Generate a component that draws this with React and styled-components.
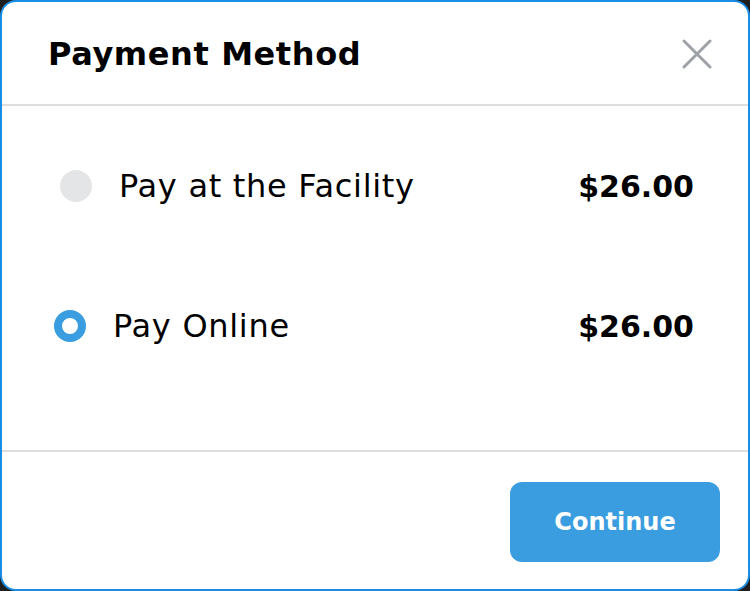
import React, { useState } from "react";
import styled, { createGlobalStyle } from "styled-components";

const GlobalStyle = createGlobalStyle`
  html, body {
    margin: 0;
    padding: 0;
    background: #1f1f1f;
  }
  * {
    box-sizing: border-box;
  }
`;

const Modal = styled.section`
  width: 750px;
  height: 591px;
  background: #ffffff;
  border: 2px solid #1a8de6;
  border-radius: 16px;
  display: flex;
  flex-direction: column;
  overflow: hidden;
  font-family: "DejaVu Sans", "Noto Sans", sans-serif;
  color: #000;
`;

const Header = styled.header`
  height: 104px;
  display: flex;
  align-items: center;
  justify-content: space-between;
  padding: 2px 36px 0 46px;
  border-bottom: 2px solid #dedede;
`;

const Title = styled.h2`
  margin: 0;
  font-size: 32px;
  font-weight: 700;
  letter-spacing: 0.6px;
`;

const CloseButton = styled.button`
  width: 30px;
  height: 30px;
  padding: 0;
  border: none;
  background: none;
  cursor: pointer;
  display: flex;
  align-items: center;
  justify-content: center;
`;

const Options = styled.div`
  height: 346px;
  display: flex;
  flex-direction: column;
  gap: 70px;
  padding: 45px 54px 0 52px;
  border-bottom: 2px solid #dedede;
`;

const OptionRow = styled.label`
  height: 70px;
  display: flex;
  align-items: center;
  gap: 27px;
  padding-left: ${(props) => (props.checked ? "0" : "6px")};
  cursor: pointer;
`;

const Radio = styled.span`
  flex: none;
  width: 32px;
  height: 32px;
  border-radius: 50%;
  background: ${(props) => (props.checked ? "#ffffff" : "#e4e5e7")};
  border: ${(props) => (props.checked ? "8px solid #3a9de0" : "none")};
`;

const OptionLabel = styled.span`
  flex: 1;
  font-size: 32px;
  font-weight: 400;
  letter-spacing: 0.7px;
`;

const Price = styled.span`
  font-size: 30px;
  font-weight: 700;
`;

const Footer = styled.footer`
  flex: 1;
  display: flex;
  align-items: center;
  justify-content: flex-end;
  padding: 3px 28px 0 0;
`;

const ContinueButton = styled.button`
  width: 210px;
  height: 80px;
  border: none;
  border-radius: 12px;
  background: #3a9de0;
  color: #ffffff;
  font-family: "DejaVu Sans", "Noto Sans", sans-serif;
  font-size: 24px;
  font-weight: 700;
  cursor: pointer;
`;

const options = [
  { id: "facility", label: "Pay at the Facility", price: "$26.00" },
  { id: "online", label: "Pay Online", price: "$26.00" },
];

export default function App() {
  const [selected, setSelected] = useState("online");

  return (
    <>
      <GlobalStyle />
      <Modal>
        <Header>
          <Title>Payment Method</Title>
          <CloseButton aria-label="Close">
            <svg width="30" height="30" viewBox="0 0 30 30">
              <path
                d="M2 2 L28 28 M28 2 L2 28"
                stroke="#9ea2a6"
                strokeWidth="3"
                strokeLinecap="round"
              />
            </svg>
          </CloseButton>
        </Header>
        <Options>
          {options.map((option) => (
            <OptionRow
              key={option.id}
              checked={selected === option.id}
              onClick={() => setSelected(option.id)}
            >
              <Radio checked={selected === option.id} />
              <OptionLabel>{option.label}</OptionLabel>
              <Price>{option.price}</Price>
            </OptionRow>
          ))}
        </Options>
        <Footer>
          <ContinueButton>Continue</ContinueButton>
        </Footer>
      </Modal>
    </>
  );
}
